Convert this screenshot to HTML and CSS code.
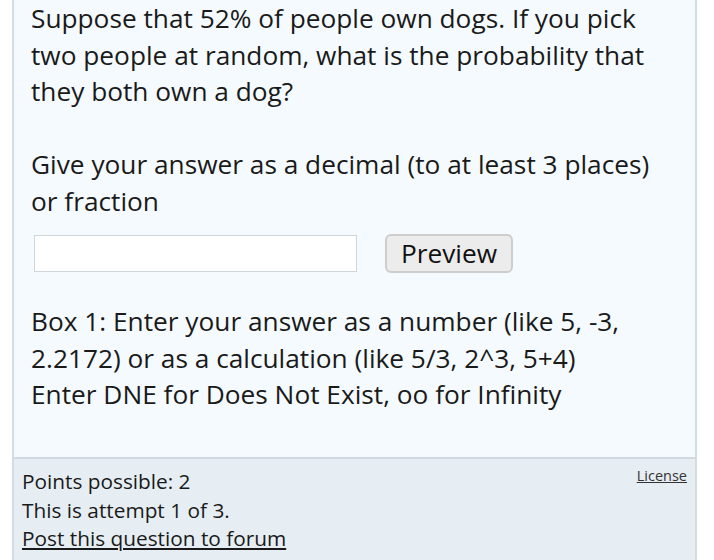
FILE: index.html
```html
<!DOCTYPE html>
<html lang="en">
<head>
    <meta charset="UTF-8">
    <meta name="viewport" content="width=device-width, initial-scale=1.0">
    <title>Question</title>
    <link rel="stylesheet" href="styles.css">
</head>
<body>

<div class="soru-kutusu">
    <div class="soru-metni">
        <p>Suppose that 52% of people own dogs. If you pick two people at random, what is the probability that they both own a dog?</p>
        <p class="istek">Give your answer as a decimal (to at least 3 places) or fraction</p>
        <div class="cevap-satiri">
            <input type="text" class="cevap-kutusu">
            <button class="onizle">Preview</button>
        </div>
        <p class="ipucu">Box 1: Enter your answer as a number (like 5, -3, 2.2172) or as a calculation (like 5/3, 2^3, 5+4)<br>Enter DNE for Does Not Exist, oo for Infinity</p>
    </div>

    <div class="alt-bilgi">
        <div class="bilgiler">
            <div>Points possible: 2</div>
            <div>This is attempt 1 of 3.</div>
            <a href="#">Post this question to forum</a>
        </div>
        <a href="#" class="lisans">License</a>
    </div>
</div>

</body>
</html>
```

FILE: styles.css
```css
body {
    margin: 0;
    background-color: #fff;
    font-family: "Open Sans", "DejaVu Sans", sans-serif;
    color: #1a1a1a;
}

.soru-kutusu {
    margin-left: 12px;
    width: 681px;
    border: 2px solid #d3dce2;
    border-top: none;
    background-color: #f5faff;
}

.soru-metni {
    padding: 0 20px 0 17px;
    font-size: 26.25px;
    line-height: 36.5px;
}

.soru-metni p {
    margin: 0 0 36.5px 0;
}

.soru-metni .istek {
    margin-bottom: 15px;
}

.cevap-satiri {
    display: flex;
    align-items: center;
    gap: 28px;
    margin: 0 0 30px 3px;
}

.cevap-kutusu {
    width: 323px;
    height: 37px;
    box-sizing: border-box;
    border: 1px solid #cfd6da;
    background-color: #fff;
    padding: 4px;
    font-size: 22px;
}

.onizle {
    height: 39px;
    padding: 0 14px;
    font-family: "Open Sans", sans-serif;
    font-size: 26.25px;
    line-height: 1;
    color: #111;
    background-color: #ececec;
    border: 2px solid #cdcdcd;
    border-radius: 6px;
}

.ipucu {
    padding-bottom: 8px;
}

.alt-bilgi {
    display: flex;
    justify-content: space-between;
    align-items: flex-start;
    border-top: 2px solid #d0d9df;
    background-color: #e6eef3;
    padding: 8px;
}

.bilgiler {
    font-size: 20.8px;
    line-height: 28.5px;
}

.bilgiler a {
    color: #1a1a1a;
}

.lisans {
    color: #333;
    font-size: 14.5px;
    margin-top: -1px;
}
```
